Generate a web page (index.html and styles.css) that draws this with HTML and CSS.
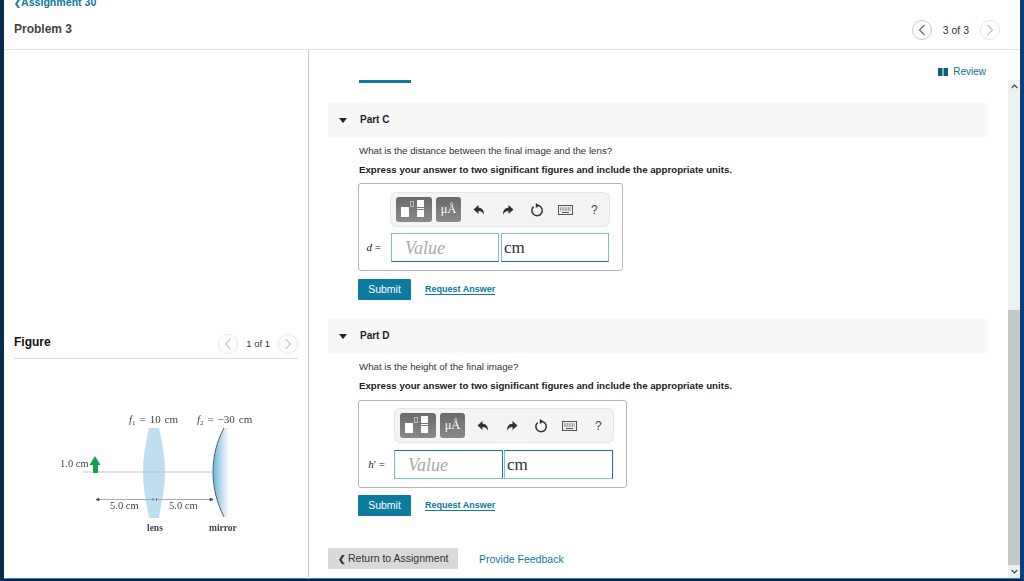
FILE: index.html
```html
<!DOCTYPE html>
<html lang="en">
<head>
<meta charset="utf-8">
<title>Problem 3</title>
<link rel="stylesheet" href="styles.css">
</head>
<body>
<svg class="sprites" width="0" height="0" aria-hidden="true">
  <symbol id="i-undo" viewBox="0 0 14 14"><path d="M6.500 2 1.500 6.500 6.500 11V8c2.500 0 4 1 5.500 3.500C12 7 10 4.700 6.500 4.700Z" fill="#333"/></symbol>
  <symbol id="i-redo" viewBox="0 0 14 14"><path d="M7.500 2 12.500 6.500 7.500 11V8C5 8 3.500 9 2 11.500 2 7 4 4.700 7.500 4.700Z" fill="#333"/></symbol>
  <symbol id="i-reset" viewBox="0 0 14 14"><path d="M8.800 2.600A5.200 5.200 0 1 1 3.600 3.600" fill="none" stroke="#333" stroke-width="1.500"/><path d="M5.800 0v5l4-2.500Z" fill="#333"/></symbol>
  <symbol id="i-kbd" viewBox="0 0 15 10"><rect x=".5" y=".5" width="14" height="9" fill="#eee" stroke="#555"/><path d="M2 3h11M2 5h11" stroke="#555" stroke-dasharray="1 .6"/><path d="M4 7.500h7" stroke="#555"/></symbol>
  <symbol id="i-prev" viewBox="0 0 8 12"><path d="M6.500 1 1.500 6l5 5" fill="none" stroke="currentColor" stroke-width="1.200"/></symbol>
  <symbol id="i-next" viewBox="0 0 8 12"><path d="M1.500 1l5 5-5 5" fill="none" stroke="currentColor" stroke-width="1.200"/></symbol>
</svg>
<div class="frame">
  <header class="top">
    <a class="crumb" href="#"><span class="crumb-arrow">&#10094;</span>Assignment 30</a>
    <div class="top-row">
      <h1 class="problem">Problem 3</h1>
      <div class="pager">
        <span class="round"><svg class="chev"><use href="#i-prev"/></svg></span>
        <span class="count">3 of 3</span>
        <span class="round off"><svg class="chev"><use href="#i-next"/></svg></span>
      </div>
    </div>
  </header>
  <div class="body">
    <aside class="left">
      <div class="fig-head">
        <h2 class="fig-title">Figure</h2>
        <div class="pager small">
          <span class="round off"><svg class="chev"><use href="#i-prev"/></svg></span>
          <span class="count">1 of 1</span>
          <span class="round off"><svg class="chev"><use href="#i-next"/></svg></span>
        </div>
      </div>
      <svg class="diagram" width="294" height="190" viewBox="0 0 294 190">
        <defs>
          <linearGradient id="mg" x1="0" x2="1" y1="0" y2="0">
            <stop offset="0" stop-color="#6fb3dd"/><stop offset="1" stop-color="#ffffff"/>
          </linearGradient>
        </defs>
        <path d="M145 69h10c4 18 6 30 6 44 0 16-3 28-6 46h-10c-3-18-6-30-6-46 0-14 2-26 6-44Z" fill="#bfdff1"/>
        <path d="M220 69c-7 13-11 28-11 44 0 16 4 31 11 45h5V69Z" fill="url(#mg)"/>
        <path d="M220 69c-7 13-11 28-11 44 0 16 4 31 11 45" fill="none" stroke="#4c5e6b"/>
        <path d="M79 113h130" stroke="#c2c5c7"/>
        <path d="M89 114v-8h-3.500l5.500-9 5.500 9H94v8Z" fill="#0ea14e"/>
        <path d="M92 140.500h117" stroke="#a8a8a8"/>
        <path d="M92 140.500l3-1.500v3ZM209 140.500l-3-1.500v3ZM149 139v3M152.500 139v3" fill="#444" stroke="#444" stroke-width=".6"/>
        <g class="fig-text">
          <text x="125" y="64" class="f"><tspan class="it">f</tspan><tspan class="sub" dy="2">1</tspan><tspan dy="-2"> = 10 cm</tspan></text>
          <text x="193" y="64" class="f"><tspan class="it">f</tspan><tspan class="sub" dy="2">2</tspan><tspan dy="-2"> = &#8722;30 cm</tspan></text>
          <text x="56" y="108">1.0 cm</text>
          <text x="106" y="150">5.0 cm</text>
          <text x="165" y="150">5.0 cm</text>
          <text x="143" y="172" class="b">lens</text>
          <text x="205" y="172" class="b">mirror</text>
        </g>
      </svg>
    </aside>
    <main class="right">
      <div class="scrollbar">
        <span class="sb-btn"><svg width="7" height="5" viewBox="0 0 7 5"><path d="M.7 4 3.500 1.200 6.300 4" fill="none" stroke="#444" stroke-width="1.200"/></svg></span>
        <span class="sb-track"></span>
        <span class="sb-thumb"></span>
        <span class="sb-btn"><svg width="7" height="5" viewBox="0 0 7 5"><path d="M.7 1 3.500 3.800 6.300 1" fill="none" stroke="#444" stroke-width="1.200"/></svg></span>
      </div>
      <div class="review-row"><a class="review" href="#"><svg class="book" width="10" height="8" viewBox="0 0 10 8"><path d="M0 0h4.500v8H0ZM5.500 0H10v8H5.500Z" fill="#0d5f7c"/></svg>Review</a></div>
      <div class="rule"></div>

      <section class="part">
        <div class="part-bar"><span class="tri"></span><span class="part-name">Part C</span></div>
        <p class="q">What is the distance between the final image and the lens?</p>
        <p class="ins">Express your answer to two significant figures and include the appropriate units.</p>
        <div class="box box-c">
          <div class="toolbar">
            <span class="tb tb-frac"><span class="sq big"></span><span class="tiny"></span><span class="fr"><span class="sq"></span><span class="fr-line"></span><span class="sq"></span></span></span>
            <span class="tb tb-mu">&#956;&#8491;</span>
            <span class="ico"><svg width="14" height="14"><use href="#i-undo"/></svg></span>
            <span class="ico"><svg width="14" height="14"><use href="#i-redo"/></svg></span>
            <span class="ico"><svg width="14" height="14"><use href="#i-reset"/></svg></span>
            <span class="ico"><svg width="15" height="10"><use href="#i-kbd"/></svg></span>
            <span class="ico help">?</span>
          </div>
          <div class="answer">
            <span class="lab"><i>d</i> =</span>
            <span class="inp val">Value</span>
            <span class="inp">cm</span>
          </div>
        </div>
        <div class="actions"><a class="submit" href="#">Submit</a><a class="req" href="#">Request Answer</a></div>
      </section>

      <section class="part part-d">
        <div class="part-bar"><span class="tri"></span><span class="part-name">Part D</span></div>
        <p class="q">What is the height of the final image?</p>
        <p class="ins">Express your answer to two significant figures and include the appropriate units.</p>
        <div class="box box-d">
          <div class="toolbar">
            <span class="tb tb-frac"><span class="sq big"></span><span class="tiny"></span><span class="fr"><span class="sq"></span><span class="fr-line"></span><span class="sq"></span></span></span>
            <span class="tb tb-mu">&#956;&#8491;</span>
            <span class="ico"><svg width="14" height="14"><use href="#i-undo"/></svg></span>
            <span class="ico"><svg width="14" height="14"><use href="#i-redo"/></svg></span>
            <span class="ico"><svg width="14" height="14"><use href="#i-reset"/></svg></span>
            <span class="ico"><svg width="15" height="10"><use href="#i-kbd"/></svg></span>
            <span class="ico help">?</span>
          </div>
          <div class="answer">
            <span class="lab"><i>h</i>&#8242; =</span>
            <span class="inp val">Value</span>
            <span class="inp">cm</span>
          </div>
        </div>
        <div class="actions"><a class="submit" href="#">Submit</a><a class="req" href="#">Request Answer</a></div>
      </section>

      <div class="foot">
        <a class="return" href="#"><span class="ret-arrow">&#10094;</span>Return to Assignment</a>
        <a class="feedback" href="#">Provide Feedback</a>
      </div>
    </main>
  </div>
</div>
</body>
</html>
```

FILE: styles.css
```css
* { box-sizing: border-box; }
html, body { margin: 0; height: 100%; overflow: hidden; }
body { font-family: "Liberation Sans", Arial, sans-serif; color: #333; background: #06305a; }
a { text-decoration: none; }
.sprites { position: absolute; }
p, h1, h2 { margin: 0; }

.frame {
  width: 1024px; height: 581px;
  display: flex; flex-direction: column;
  background: #fff;
  border-left: 4px solid #042c50;
  border-right: 4px solid #0a3f7d;
  border-bottom: 2px solid #06214a;
  box-shadow: inset 0 -1px 0 #2f86cf;
}

.top { height: 50px; flex: none; border-bottom: 1px solid #e2e4e6; padding: 0 20px 0 10px; overflow: hidden; }
.crumb { display: block; height: 8px; margin-top: -3px; font-size: 10.600px; line-height: 11px; font-weight: bold; color: #0d7a9e; }
.crumb-arrow { font-size: 8px; margin-right: 0; }
.top-row { display: flex; justify-content: space-between; align-items: center; margin-top: 13px; height: 24px; }
.problem { font-size: 12px; font-weight: bold; color: #444; margin-bottom: 2px; }
.pager { display: flex; align-items: center; gap: 11px; font-size: 10.500px; color: #333; }
.round { width: 20px; height: 20px; border-radius: 50%; border: 1px solid #c8c8c8; display: flex; align-items: center; justify-content: center; color: #667; }
.round.off { border-color: #e6e6e6; color: #c4c4c4; }
.chev { width: 8px; height: 12px; }

.body { flex: 1; display: flex; min-height: 0; }
.left { width: 305px; flex: none; border-right: 1px solid #b6cde0; padding: 0 10px; display: flex; flex-direction: column; justify-content: flex-end; }
.fig-head { display: flex; justify-content: space-between; align-items: center; height: 29px; flex: none; border-bottom: 1px solid #dcdcdc; padding-bottom: 5px; }
.fig-title { font-size: 12px; font-weight: bold; color: #111; }
.pager.small { gap: 8px; font-size: 9.500px; padding-top: 4px; }
.diagram { display: block; flex: none; filter: blur(.35px); margin-left: -10px; margin-bottom: 30px; }
.fig-text { font-family: "Liberation Serif", serif; font-size: 10.500px; fill: #444; }
.fig-text .f { font-size: 11px; word-spacing: 1.200px; }
.fig-text .it { font-style: italic; }
.fig-text .sub { font-size: 7px; }
.fig-text .b { font-weight: bold; font-size: 9.500px; }

.right { flex: 1; padding: 0 32px 0 19px; position: relative; min-width: 0; }
.scrollbar { position: absolute; right: 0; top: 30px; bottom: 1px; width: 12px; display: flex; flex-direction: column; background: #f0f0f0; }
.sb-btn { height: 13px; flex: none; display: flex; align-items: center; justify-content: center; }
.sb-track { flex: 1; }
.sb-thumb { height: 255px; flex: none; background: #c8c8c8; }

.review-row { display: flex; justify-content: flex-end; height: 14px; margin-top: 15px; }
.review { font-size: 10px; line-height: 14px; color: #0d6f92; display: flex; align-items: center; gap: 5px; margin-right: 2px; }
.book { display: block; }
.rule { width: 52px; height: 3px; background: #0d7a9e; margin: 1px 0 20px 31px; }

.part-bar { height: 34px; background: #f7f7f7; font-size: 10px; font-weight: bold; color: #222; display: flex; align-items: center; padding-left: 11px; }
.part-name { margin-bottom: 2px; }
.tri { width: 0; height: 0; border: 4px solid transparent; border-top: 5px solid #222; border-bottom: 0; margin-right: 13px; }
.q { font-size: 9.700px; line-height: 12px; color: #333; margin: 8px 0 0 31px; }
.ins { font-size: 9.700px; line-height: 12px; font-weight: bold; color: #222; margin: 7px 0 0 31px; }

.box { margin: 7px 0 0 30px; height: 88px; border: 1px solid #b5b5b5; border-radius: 3px; padding: 8px 12px 0 31px; }
.box-c { width: 265px; }
.box-d { width: 269px; margin-top: 8px; padding: 7px 12px 0 35px; }
.toolbar { height: 35px; background: #f4f4f4; border: 1px solid #e6e6e6; border-radius: 6px; display: flex; align-items: center; padding-left: 5px; }
.tb { height: 25px; border-radius: 3px; background: linear-gradient(#6a6a6a, #8a8a8a); display: flex; color: #fff; flex: none; }
.tb-frac { width: 36px; margin-right: 4px; padding: 3px 4px 0 5px; gap: 1px; }
.tb-mu { width: 25px; align-items: center; justify-content: center; font-family: "Liberation Serif", serif; font-size: 12.500px; margin-right: 4px; }
.sq { display: block; width: 7px; height: 7px; background: #fff; }
.sq.big { width: 8px; height: 10px; margin-top: 7px; }
.tiny { width: 4px; height: 6px; border: 1px solid #bbb; margin: 1px 2px 0 0; }
.fr { display: flex; flex-direction: column; gap: 1px; }
.fr-line { height: 1px; width: 7px; background: #fff; }
.ico { width: 28.750px; height: 20px; display: flex; align-items: center; justify-content: center; flex: none; }
.help { font-size: 12px; color: #444; }
.answer { display: grid; grid-template-columns: 1fr 1fr; margin: 6px 1px 0; column-gap: 2px; position: relative; }
.box-d .answer { margin: 7px 1px 0 0; column-gap: 1px; }
.lab { position: absolute; top: 0; right: 100%; margin-right: 10px; font-family: "Liberation Serif", serif; font-size: 11px; line-height: 28px; white-space: nowrap; color: #222; }
.box-d .lab { margin-right: 9px; }
.inp { min-width: 0; height: 29px; border: 1px solid #7fbdd0; border-bottom-color: #0d7a9e; font-family: "Liberation Serif", serif; font-size: 17px; line-height: 28px; padding-left: 2px; color: #333; background: #fff; }
.box-d .inp { border-top-color: #0d7a9e; border-right-color: #0d7a9e; border-bottom-color: #7fbdd0; }
.inp.val { font-size: 18px; font-style: italic; color: #a9a9a9; padding-left: 13px; }

.actions { display: flex; align-items: center; gap: 14px; margin: 8px 0 0 30px; height: 21px; }
.box-d + .actions { margin-top: 7px; }
.submit { width: 53px; height: 21px; background: #0d7a9e; border-radius: 1px; color: #fff; font-size: 10.500px; line-height: 21px; text-align: center; }
.req { font-size: 9px; font-weight: bold; color: #0d7a9e; border-bottom: 1px solid #0d7a9e; line-height: 10px; }
.part-d { margin-top: 19px; }

.foot { display: flex; align-items: center; gap: 21px; margin-top: 32px; }
.return { width: 130px; height: 21px; background: #d9d9d9; border-radius: 1px; font-size: 10.500px; line-height: 21px; color: #333; padding-left: 10px; white-space: nowrap; }
.ret-arrow { font-size: 9px; font-weight: bold; margin-right: 2px; }
.feedback { font-size: 10.500px; color: #0d7a9e; }
```
